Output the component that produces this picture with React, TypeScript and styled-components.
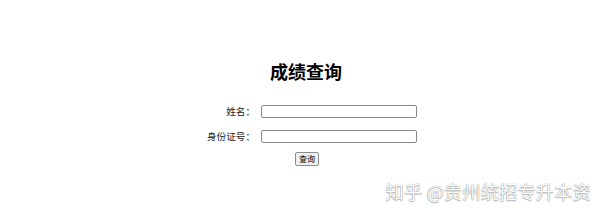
import styled, { createGlobalStyle } from "styled-components";

const GlobalStyle = createGlobalStyle`
  html, body {
    margin: 0;
    padding: 0;
    background: #ffffff;
  }
  body {
    font-family: "Noto Sans CJK SC", "Liberation Sans", sans-serif;
  }
`;

const App = () => {
  return (
    <>
      <GlobalStyle />
      <Page>
        <Title>成绩查询</Title>
        <Form onSubmit={(e) => e.preventDefault()}>
          <Label htmlFor="name">姓名：</Label>
          <Field id="name" type="text" />
          <Label htmlFor="idcard">身份证号：</Label>
          <Field id="idcard" type="text" />
          <SubmitButton type="submit">查询</SubmitButton>
        </Form>
        <Watermark>知乎 @贵州统招专升本资</Watermark>
      </Page>
    </>
  );
};

export default App;

const Page = styled.div`
  position: relative;
  width: 600px;
  height: 222px;
  display: flex;
  flex-direction: column;
  align-items: center;
  padding-top: 60px;
  box-sizing: border-box;
  overflow: hidden;
`;

const Title = styled.h1`
  margin: 0 0 0 12px;
  font-size: 18px;
  line-height: 22px;
  font-weight: 700;
  color: #000;
`;

const Form = styled.form`
  display: grid;
  grid-template-columns: 50px 156px;
  column-gap: 6px;
  row-gap: 12px;
  align-items: center;
  margin-top: 23px;
  margin-left: 22px;
`;

const Label = styled.label`
  font-size: 9.6px;
  line-height: 13px;
  color: #222;
  text-align: right;
  white-space: nowrap;
`;

const Field = styled.input`
  width: 156px;
  height: 13px;
  box-sizing: border-box;
  border: 1px solid #8a8a8a;
  border-radius: 2px;
  padding: 0 2px;
  margin: 0;
  font-size: 9px;
  background: #fff;
`;

const SubmitButton = styled.button`
  grid-column: 1 / -1;
  justify-self: center;
  margin-top: -3px;
  margin-left: -8px;
  width: 24px;
  height: 14px;
  padding: 0;
  box-sizing: border-box;
  border: 1px solid #8d8d8d;
  border-radius: 2px;
  background: #efefef;
  font-family: "Noto Sans CJK SC", sans-serif;
  font-size: 8px;
  line-height: 12px;
  color: #000;
`;

const Watermark = styled.div`
  position: absolute;
  right: 9px;
  bottom: 20px;
  font-size: 18.4px;
  line-height: 22px;
  color: #ffffff;
  text-shadow: 0 0 1px rgba(0, 0, 0, 0.55), 0 1px 1px rgba(0, 0, 0, 0.25);
  white-space: nowrap;
`;
